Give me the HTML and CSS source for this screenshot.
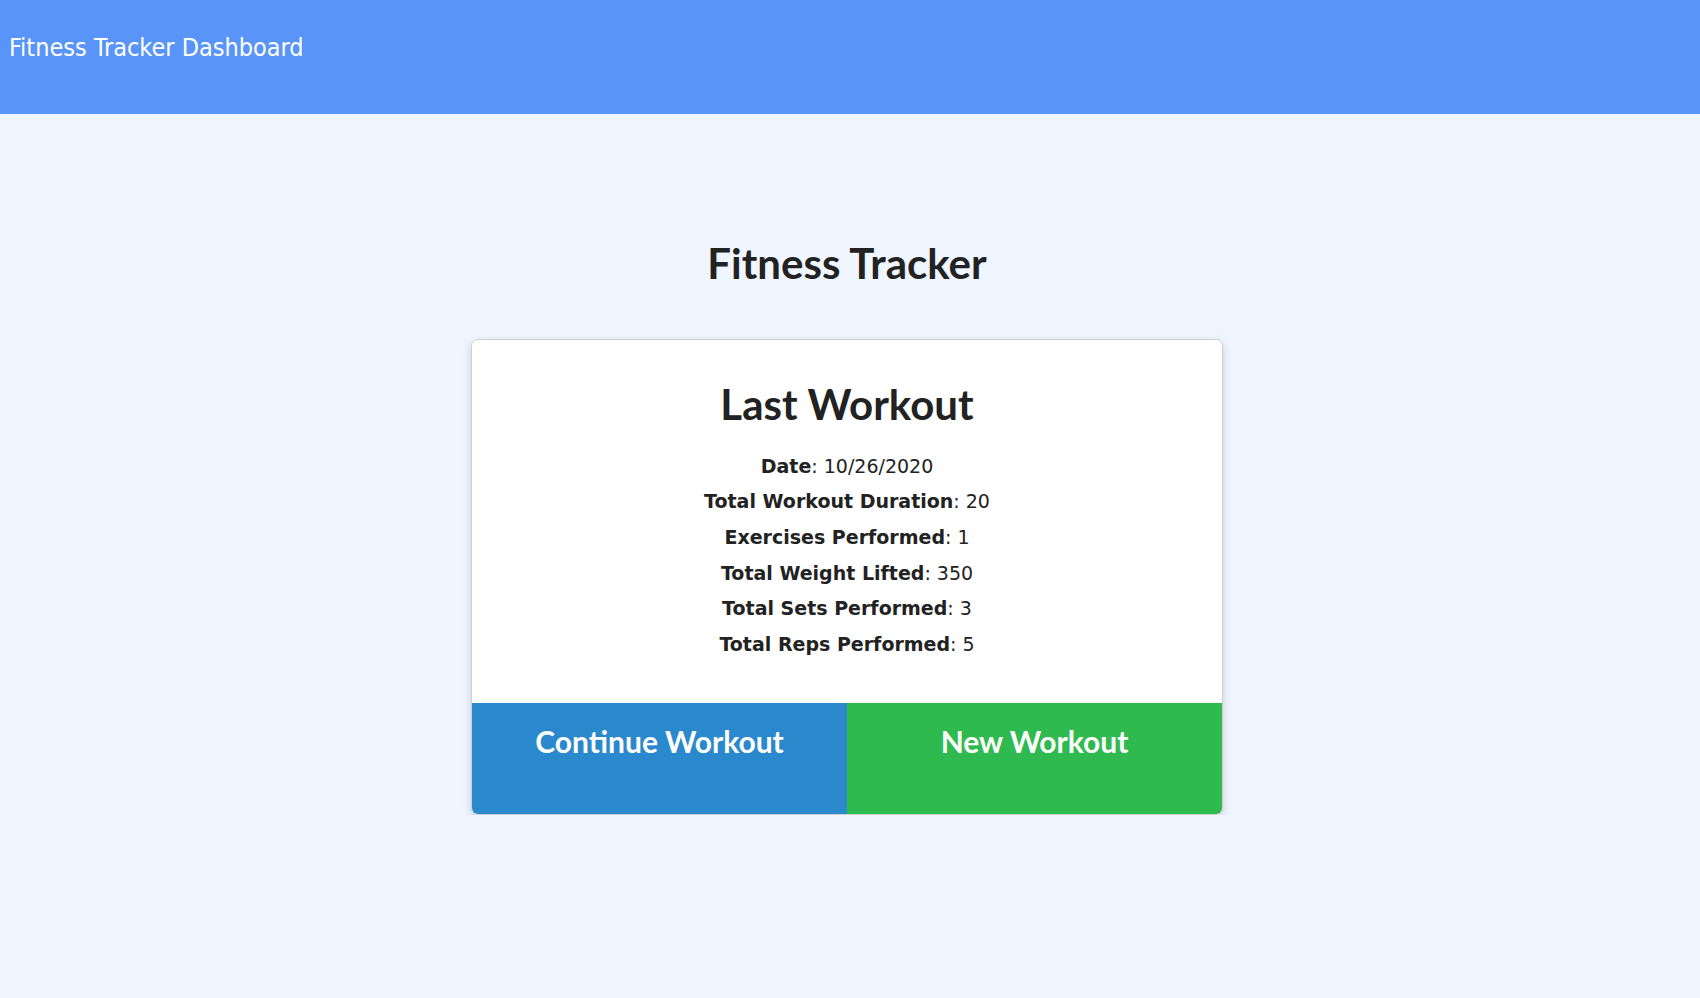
FILE: index.html
```html
<!DOCTYPE html>
<html lang="en">
<head>
    <meta charset="UTF-8">
    <meta name="viewport" content="width=device-width, initial-scale=1.0">
    <title>Fitness Tracker</title>
    <link rel="stylesheet" href="styles.css">
</head>
<body>
    <nav class="topbar">
        <span class="brand">Fitness Tracker Dashboard</span>
    </nav>

    <main class="wrapper">
        <h1 class="page-title">Fitness Tracker</h1>

        <div class="card">
            <div class="card-body">
                <h2 class="card-title">Last Workout</h2>
                <p><strong>Date</strong>: 10/26/2020</p>
                <p><strong>Total Workout Duration</strong>: 20</p>
                <p><strong>Exercises Performed</strong>: 1</p>
                <p><strong>Total Weight Lifted</strong>: 350</p>
                <p><strong>Total Sets Performed</strong>: 3</p>
                <p><strong>Total Reps Performed</strong>: 5</p>
            </div>
            <div class="actions">
                <a href="#" class="btn btn-continue">Continue Workout</a>
                <a href="#" class="btn btn-new">New Workout</a>
            </div>
        </div>
    </main>
</body>
</html>
```

FILE: styles.css
```css
body {
    margin: 0;
    font-family: "DejaVu Sans", Verdana, sans-serif;
    color: #222;
    background-color: #eff6ff;
}
.topbar {
    height: 114px;
    background-color: #5995f8;
    padding: 0 9px;
}
.brand {
    display: block;
    padding-top: 33px;
    font-family: "DejaVu Sans Condensed", "DejaVu Sans", sans-serif;
    font-size: 25px;
    color: #fff;
}
.wrapper {
    display: flex;
    flex-direction: column;
    align-items: center;
    padding-right: 6px;
}
.page-title {
    font-family: Lato, "Open Sans", sans-serif;
    font-weight: 700;
    font-size: 42px;
    margin: 124px 0 51px;
    line-height: 1.2;
}
.card {
    width: 750px;
    background: #fff;
    border: 1px solid #d0d0d0;
    border-radius: 7px;
    box-shadow: 0 3px 10px rgba(0, 0, 0, 0.16);
    overflow: hidden;
}
.card-body {
    text-align: center;
    padding: 39px 20px 41px;
}
.card-title {
    font-family: Lato, "Open Sans", sans-serif;
    font-weight: 700;
    font-size: 42px;
    line-height: 1.2;
    margin: 0 0 19px;
}
.card-body p {
    font-size: 19px;
    margin: 0;
    line-height: 35.6px;
}
.actions {
    display: flex;
    height: 111px;
}
.btn {
    flex: 1;
    text-align: center;
    font-family: Lato, "Open Sans", sans-serif;
    font-weight: 700;
    font-size: 30px;
    color: #fff;
    text-decoration: none;
    padding-top: 20px;
}
.btn-continue {
    background-color: #2a88cd;
}
.btn-new {
    background-color: #2eba4e;
}
```
